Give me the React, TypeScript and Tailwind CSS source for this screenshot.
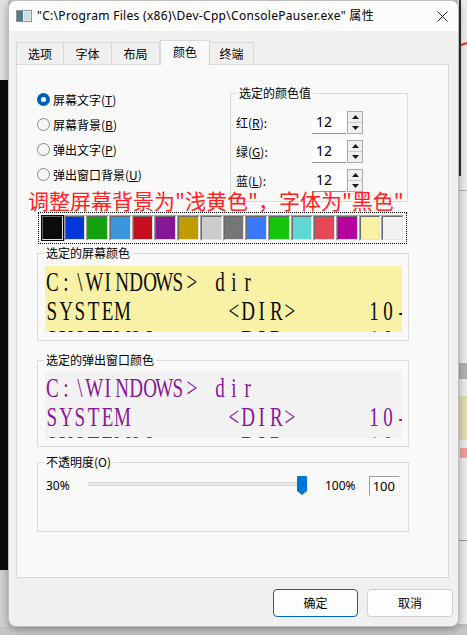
import React from "react";

const UI = "font-['Noto_Sans','Noto_Sans_CJK_SC',sans-serif]";
const CJK = "font-['Noto_Sans_CJK_SC',sans-serif]";

const swatches = [
  "#0c0c0c", "#0037da", "#13a10e", "#3a96dd", "#c50f1f", "#881798", "#c19c00", "#cccccc",
  "#767676", "#3b78ff", "#16c60c", "#61d6d6", "#e74856", "#b4009e", "#f9f1a5", "#f2f2f2",
];

const consoleLines = [
  "C:\\WINDOWS> dir",
  "SYSTEM       <DIR>     10-01-99",
  "SYSTEM32     <DIR>     10-01-99",
];

function ConsoleText({ color }: { color: string }) {
  return (
    <div className="pt-[1px] font-['Liberation_Serif',serif] text-[28px] leading-[29px]" style={{ color }}>
      {consoleLines.map((line, i) => (
        <div key={i} className="flex h-[29px] whitespace-pre">
          {line.split("").map((ch, j) => (
            <span key={j} className="flex w-[14px] shrink-0 justify-center">
              <span className="inline-block scale-x-[0.68]">{ch}</span>
            </span>
          ))}
        </div>
      ))}
    </div>
  );
}

function Radio({ checked, label, k }: { checked?: boolean; label: string; k: string }) {
  return (
    <div className="flex h-[25px] items-center">
      {checked ? (
        <span className="flex h-[13px] w-[13px] items-center justify-center rounded-full bg-[#005fb8]">
          <span className="h-[5px] w-[5px] rounded-full bg-white" />
        </span>
      ) : (
        <span className="h-[13px] w-[13px] rounded-full border border-[#8a8a8a] bg-[#f6f6f6]" />
      )}
      <span className={`ml-[3px] text-[12px] leading-[16px] text-black ${CJK}`}>
        {label}(<u>{k}</u>)
      </span>
    </div>
  );
}

function Spin({ label, k }: { label: string; k: string }) {
  return (
    <div className="flex h-[29px] items-center">
      <span className={`w-[76px] text-[12px] leading-[16px] ${CJK}`}>
        {label}(<u>{k}</u>):
      </span>
      <div className="flex h-[23px] w-[34px] items-center border-b border-[#8f8f8f] bg-white pl-[4px] text-[14px] leading-[16px] font-['Noto_Sans',sans-serif]">
        12
      </div>
      <div className="ml-[1px] flex h-[23px] w-[16px] flex-col border border-[#adadad] bg-[#f0f0f0]">
        <div className="flex flex-1 items-center justify-center border-b border-[#c8c8c8]">
          <svg width="7" height="4" viewBox="0 0 7 4"><polygon points="0,4 7,4 3.5,0" fill="#1a1a1a" /></svg>
        </div>
        <div className="flex flex-1 items-center justify-center">
          <svg width="7" height="4" viewBox="0 0 7 4"><polygon points="0,0 7,0 3.5,4" fill="#1a1a1a" /></svg>
        </div>
      </div>
    </div>
  );
}

function Group({ title, className, children }: { title: string; className: string; children?: React.ReactNode }) {
  return (
    <div className={`relative border border-[#dcdcdc] ${className}`}>
      <span className={`absolute left-[6px] top-[-9px] bg-[#f9f9f9] px-[2px] text-[12px] leading-[16px] text-black ${CJK}`}>
        {title}
      </span>
      {children}
    </div>
  );
}

export default function App() {
  const tabs = [
    { t: "选项", w: "w-[48px]" },
    { t: "字体", w: "w-[48px]" },
    { t: "布局", w: "w-[48px]" },
    { t: "颜色", w: "w-[50px]", sel: true },
    { t: "终端", w: "w-[44px]" },
  ];
  return (
    <div className={`relative h-[635px] w-[467px] overflow-hidden bg-[#c9c9c9] ${UI}`}>
      {/* desktop behind */}
      <div className="absolute left-0 top-0 h-[80px] w-[8px] bg-[#e2e2e2]" />
      <div className="absolute left-0 top-[80px] h-[490px] w-[8px] bg-[#0a0a0a]" />
      <div className="absolute left-0 top-[570px] h-[65px] w-[8px] bg-[#d2d2d2]" />
      <div className="absolute left-[458px] top-0 h-[635px] w-[9px] bg-[#ececec]" />
      <div className="absolute left-[459px] top-0 h-[176px] w-[2px] bg-[#2e2e2e]" />
      <div className="absolute left-[461px] top-[43px] h-[2px] w-[6px] rotate-[-20deg] bg-[#ff2020]" />
      <div className="absolute left-[458px] top-[190px] h-[1px] w-[9px] bg-[#b8b8b8]" />
      <div className="absolute left-[458px] top-[363px] h-[16px] w-[9px] bg-[#b4b4b4]" />
      <div className="absolute left-[458px] top-[396px] h-[44px] w-[9px] bg-[#e3ddb0]" />
      <div className="absolute left-[460px] top-[448px] h-[10px] w-[7px] bg-[#f3a0a0]" />
      <div className="absolute left-[458px] top-[540px] h-[1px] w-[9px] bg-[#9a9a9a]" />
      <div className="absolute left-[458px] top-[624px] h-[11px] w-[9px] bg-[#bdbdbd]" />
      <div className="absolute left-0 top-[627px] h-[8px] w-[467px] bg-[#c6c6c6]" />

      {/* dialog window */}
      <div className="absolute left-[8px] top-0 flex h-[627px] w-[451px] flex-col overflow-hidden rounded-[8px] border border-[#bdbdbd] bg-[#f0f0f0] shadow-[0_2px_8px_rgba(0,0,0,0.35)]">
        {/* title bar */}
        <div className="flex h-[30px] shrink-0 items-center bg-[#fcfcfc]">
          <svg className="ml-[7px]" width="16" height="12" viewBox="0 0 16 12">
            <rect x="0.5" y="0.5" width="15" height="11" fill="#eef2f3" stroke="#8c9497" />
            <rect x="1" y="1" width="6" height="10" fill="#4f7f86" />
            <rect x="8" y="2" width="6" height="8" fill="#c9dbe1" />
          </svg>
          <span className={`ml-[5px] text-[12px] leading-[16px] tracking-[0.3px] text-black ${UI}`}>
            "C:\Program Files (x86)\Dev-Cpp\ConsolePauser.exe" 属性
          </span>
          <div className="flex-1" />
          <svg className="mr-[10px]" width="11" height="11" viewBox="0 0 11 11">
            <path d="M0.5 0.5 L10.5 10.5 M10.5 0.5 L0.5 10.5" stroke="#1b1b1b" strokeWidth="1" />
          </svg>
        </div>

        {/* body */}
        <div className="flex flex-1 flex-col pl-[7px]">
          {/* tabs */}
          <div className="mt-[9px] flex h-[24px] items-end">
            {tabs.map((tab) =>
              tab.sel ? (
                <div
                  key={tab.t}
                  className={`relative z-10 -mb-[1px] flex h-[25px] ${tab.w} items-center justify-center border border-b-0 border-[#d9d9d9] bg-[#f9f9f9] pb-[2px] text-[12px] leading-[16px] ${CJK}`}
                >
                  {tab.t}
                </div>
              ) : (
                <div
                  key={tab.t}
                  className={`flex h-[22px] ${tab.w} items-center justify-center border border-b-0 border-l-0 border-[#d9d9d9] bg-[#f0f0f0] text-[12px] leading-[16px] first:border-l ${CJK}`}
                >
                  {tab.t}
                </div>
              )
            )}
          </div>

          {/* tab panel */}
          <div className="relative flex h-[514px] w-[433px] flex-col border border-[#d9d9d9] bg-[#f9f9f9] pl-[20px] pt-[22px]">
            <div className="flex h-[125px]">
              <div className="flex w-[193px] flex-col">
                <Radio checked label="屏幕文字" k="T" />
                <Radio label="屏幕背景" k="B" />
                <Radio label="弹出文字" k="P" />
                <Radio label="弹出窗口背景" k="U" />
              </div>
              <Group title="选定的颜色值" className="mt-[6px] h-[109px] w-[178px] pl-[5px] pt-[14px]">
                <Spin label="红" k="R" />
                <Spin label="绿" k="G" />
                <Spin label="蓝" k="L" />
              </Group>
            </div>

            {/* swatches */}
            <div className="ml-[1px] grid h-[32px] w-[369px] grid-cols-16 border border-dotted border-black px-[2px] py-[2px]">
              {swatches.map((c, i) => (
                <div
                  key={c}
                  className={`border border-t-[#a0a0a0] border-l-[#a0a0a0] border-b-white border-r-white ${i === 0 ? "outline outline-1 -outline-offset-1 outline-black" : ""}`}
                >
                  <div className="h-full w-full border border-t-[#6a6a6a] border-l-[#6a6a6a] border-b-[#e3e3e3] border-r-[#e3e3e3]" style={{ backgroundColor: c }} />
                </div>
              ))}
            </div>

            <Group title="选定的屏幕颜色" className="mt-[9px] h-[88px] w-[372px] pl-[7px] pt-[12px]">
              <div className="h-[66px] w-[357px] overflow-hidden bg-[#f9f1a5]">
                <ConsoleText color="#0c0c0c" />
              </div>
            </Group>

            <Group title="选定的弹出窗口颜色" className="mt-[19px] h-[87px] w-[372px] pl-[7px] pt-[11px]">
              <div className="h-[66px] w-[357px] overflow-hidden bg-[#f2f2f2]">
                <ConsoleText color="#881798" />
              </div>
            </Group>

            <Group title="不透明度(O)" className="mt-[15px] h-[70px] w-[372px] pl-[8px] pt-[13px]">
              <div className="flex h-[20px] items-center text-[12px] leading-[16px]">
                <span className="w-[42px]">30%</span>
                <div className="relative h-[20px] w-[219px]">
                  <div className="absolute left-0 right-[8px] top-[6px] h-[4px] rounded-[1px] border border-[#d6d6d6] bg-[#e7eaea]" />
                  <svg className="absolute left-[209px] top-0" width="10" height="19" viewBox="0 0 10 19">
                    <path d="M1 0 H9 Q10 0 10 1 V15 L5 19 L0 15 V1 Q0 0 1 0 Z" fill="#0078d4" />
                  </svg>
                </div>
                <span className="ml-[18px] w-[44px]">100%</span>
                <div className="flex h-[20px] w-[31px] items-center justify-end border border-t-[#a0a0a0] border-l-[#a0a0a0] border-b-[#f0f0f0] border-r-[#f0f0f0] bg-[#fbfbfb] pr-[4px] text-[13px]">
                  100
                </div>
              </div>
            </Group>

            {/* annotation overlay */}
            <div className={`absolute left-[11px] top-[123px] whitespace-nowrap text-[21px] leading-[24px] text-[#ff2020] ${CJK}`}>
              调整屏幕背景为"浅黄色"，字体为"黑色"
            </div>
          </div>

          {/* buttons */}
          <div className="mt-[11px] flex justify-end gap-[9px] pr-[5px]">
            <button className={`h-[28px] w-[85px] rounded-[4px] border border-[#0067c0] bg-[#fdfdfd] text-[12px] leading-[16px] ${CJK}`}>
              确定
            </button>
            <button className={`h-[28px] w-[86px] rounded-[4px] border border-[#d0d0d0] bg-[#fdfdfd] text-[12px] leading-[16px] ${CJK}`}>
              取消
            </button>
          </div>
        </div>
      </div>
    </div>
  );
}
